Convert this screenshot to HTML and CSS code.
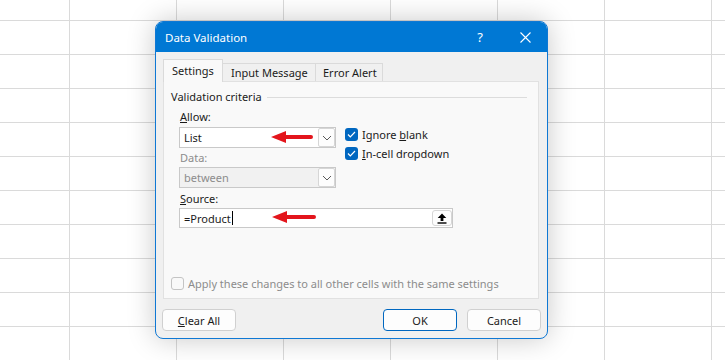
FILE: index.html
```html
<!DOCTYPE html>
<html>
<head>
<meta charset="utf-8">
<link rel="stylesheet" href="styles.css">
</head>
<body>
<div class="dialog">
  <div class="titlebar">
    <span class="title">Data Validation</span>
    <span class="help">?</span>
    <svg class="close" width="11" height="11" viewBox="0 0 11 11"><path d="M0.5 0.5 L10.5 10.5 M10.5 0.5 L0.5 10.5" stroke="#fff" stroke-width="1.1" fill="none"/></svg>
  </div>
  <div class="body">
    <div class="tabs">
      <div class="tab active">Settings</div>
      <div class="tab tab-input">Input Message</div>
      <div class="tab tab-error">Error Alert</div>
    </div>
    <div class="panel">
      <div class="legend"><span>Validation criteria</span><span class="rule"></span></div>
      <div class="label indent"><u>A</u>llow:</div>
      <div class="criteria">
        <div class="left">
          <div class="select">
            <span class="value">List</span>
            <span class="drop"><svg width="10" height="6" viewBox="0 0 10 6"><path d="M1 1 L5 5 L9 1" stroke="#5a5a5a" stroke-width="1" fill="none"/></svg></span>
          </div>
          <div class="label indent muted data-label">Data:</div>
          <div class="select disabled">
            <span class="value">between</span>
            <span class="drop"><svg width="10" height="6" viewBox="0 0 10 6"><path d="M1 1 L5 5 L9 1" stroke="#5a5a5a" stroke-width="1" fill="none"/></svg></span>
          </div>
        </div>
        <div class="checks">
          <div class="check"><span class="box on"><svg width="9" height="7" viewBox="0 0 9 7"><path d="M1 3.5 L3.3 5.8 L8 1" stroke="#fff" stroke-width="1.2" fill="none"/></svg></span><span>Ignore <u>b</u>lank</span></div>
          <div class="check"><span class="box on"><svg width="9" height="7" viewBox="0 0 9 7"><path d="M1 3.5 L3.3 5.8 L8 1" stroke="#fff" stroke-width="1.2" fill="none"/></svg></span><span><u>I</u>n-cell dropdown</span></div>
        </div>
      </div>
      <div class="label indent source-label"><u>S</u>ource:</div>
      <div class="source">
        <span class="value">=Product<span class="caret"></span></span>
        <span class="refbtn"><svg width="10" height="11" viewBox="0 0 10 11"><path d="M5 0.5 L9.3 5 L6.4 5 L6.4 8 L3.6 8 L3.6 5 L0.7 5 Z" fill="#000"/><rect x="0.5" y="9.3" width="9" height="1.4" fill="#000"/></svg></span>
      </div>
      <div class="apply check"><span class="box off"></span><span class="muted">Apply these changes to all other cells with the same settings</span></div>
    </div>
    <div class="buttons">
      <button class="btn"><u>C</u>lear All</button>
      <span class="spacer"></span>
      <button class="btn primary">OK</button>
      <button class="btn">Cancel</button>
    </div>
  </div>
  <svg class="arrow arrow-allow" width="42" height="12" viewBox="0 0 42 12"><path d="M0 6 L15 0 L15 4 L40 4 A2 2 0 0 1 40 8 L15 8 L15 12 Z" fill="#e3151c"/></svg>
  <svg class="arrow arrow-source" width="44" height="12" viewBox="0 0 44 12"><path d="M0 6 L15 0 L15 4 L42 4 A2 2 0 0 1 42 8 L15 8 L15 12 Z" fill="#e3151c"/></svg>
</div>
</body>
</html>
```
FILE: styles.css
```css
html, body {
  margin: 0;
  padding: 0;
}
body {
  width: 725px;
  height: 360px;
  overflow: hidden;
  background-color: #ffffff;
  background-image:
    linear-gradient(to right, #dadada 1px, transparent 1px),
    linear-gradient(to bottom, #dadada 1px, transparent 1px);
  background-size: 107px 34px;
  background-position: 69px 20px;
  font-family: "Noto Sans", "Open Sans", sans-serif;
  font-size: 11px;
  color: #1b1b1b;
  position: relative;
}
.dialog {
  position: absolute;
  left: 155px;
  top: 21px;
  width: 393px;
  height: 318px;
  box-sizing: border-box;
  border: 1px solid #0f78d4;
  border-radius: 8px;
  background: #f0f0f0;
  box-shadow: 0 0 28px rgba(0, 0, 0, 0.22);
  display: flex;
  flex-direction: column;
  overflow: hidden;
}
.titlebar {
  height: 30px;
  background: #0078d4;
  color: #fff;
  display: flex;
  align-items: center;
  padding-left: 9px;
  flex: none;
}
.title {
  font-size: 11.5px;
  flex: 1;
}
.help {
  font-size: 13px;
  margin-right: 37px;
}
.close {
  margin-right: 16px;
}
.body {
  flex: 1;
  display: flex;
  flex-direction: column;
  padding: 7px 8px 7px 7px;
}
.tabs {
  display: flex;
  align-items: flex-end;
  height: 22px;
  position: relative;
  z-index: 1;
}
.tab {
  height: 18px;
  line-height: 17px;
  box-sizing: border-box;
  padding: 0 0 0 8px;
  border: 1px solid #dadada;
  border-bottom: none;
  border-left: none;
  background: #f0f0f0;
  white-space: nowrap;
  overflow: hidden;
}
.tab-input {
  width: 93px;
}
.tab-error {
  width: 67px;
  padding-left: 7px;
}
.tab.active {
  height: 23px;
  line-height: 22px;
  margin-bottom: -1px;
  background: #f9f9f9;
  border-left: 1px solid #dadada;
  padding: 0 0 0 8px;
  width: 60px;
}
.panel {
  height: 218px;
  box-sizing: border-box;
  border: 1px solid #e1e1e1;
  background: #f9f9f9;
  padding: 7px 6px 8px 7px;
  display: flex;
  flex-direction: column;
}
.legend {
  display: flex;
  align-items: center;
  height: 16px;
  line-height: 16px;
}
.rule {
  flex: 1;
  height: 1px;
  background: #dcdcdc;
  margin-left: 5px;
  margin-right: 5px;
}
.label {
  height: 16px;
  line-height: 16px;
}
.indent {
  padding-left: 9px;
}
.label.indent {
  margin-top: 4px;
}
.muted {
  color: #8c8c8c;
}
.criteria {
  display: flex;
  gap: 9px;
  margin-top: 2px;
  padding-left: 8px;
}
.left {
  width: 157px;
  display: flex;
  flex-direction: column;
}
.criteria .label.indent {
  padding-left: 1px;
}
.data-label {
  margin-top: 2px !important;
}
.select {
  height: 21px;
  box-sizing: border-box;
  border: 1px solid #c9c9c9;
  background: #fff;
  display: flex;
  align-items: center;
}
.select.disabled {
  margin-top: 1px;
  background: #f1f1f1;
  color: #8c8c8c;
}
.select .value {
  flex: 1;
  padding-left: 4px;
}
.drop {
  width: 17px;
  height: 19px;
  box-sizing: border-box;
  border: 1px solid #d6d6d6;
  border-radius: 2px;
  background: #fdfdfd;
  display: flex;
  align-items: center;
  justify-content: center;
}
.checks {
  display: flex;
  flex-direction: column;
  gap: 6px;
  padding-top: 1px;
}
.check {
  display: flex;
  align-items: center;
  height: 13px;
  line-height: 13px;
  gap: 4px;
}
.box {
  width: 13px;
  height: 13px;
  box-sizing: border-box;
  border-radius: 3px;
  display: inline-flex;
  align-items: center;
  justify-content: center;
  flex: none;
}
.box.on {
  background: #0067c0;
}
.box.off {
  border: 1px solid #c4c4c4;
  background: #f9f9f9;
}
.source-label {
  margin-top: 3px !important;
}
.source {
  margin-top: 1px;
  margin-left: 8px;
  width: 274px;
  height: 20px;
  box-sizing: border-box;
  border: 1px solid #c9c9c9;
  background: #fff;
  display: flex;
  align-items: center;
}
.source .value {
  flex: 1;
  padding-left: 4px;
  display: flex;
  align-items: center;
}
.caret {
  display: inline-block;
  width: 1px;
  height: 14px;
  background: #000;
  margin-left: 1px;
}
.refbtn {
  width: 20px;
  height: 16px;
  box-sizing: border-box;
  border: 1px solid #d6d6d6;
  border-radius: 3px;
  background: #fdfdfd;
  display: flex;
  align-items: center;
  justify-content: center;
}
.apply {
  margin-top: auto;
  gap: 4px;
}
.buttons {
  display: flex;
  gap: 10px;
  margin-top: 10px;
  margin-left: -1px;
  margin-right: -2px;
}
.spacer {
  flex: 1;
}
.btn {
  width: 74px;
  height: 22px;
  box-sizing: border-box;
  border: 1px solid #d0d0d0;
  border-radius: 4px;
  background: #fdfdfd;
  font-family: inherit;
  font-size: 11px;
  color: #1b1b1b;
  padding: 0;
}
.btn.primary {
  border-color: #0067c0;
}
.arrow {
  position: absolute;
}
.arrow-allow {
  left: 115px;
  top: 109px;
}
.arrow-source {
  left: 116px;
  top: 189px;
}
```
